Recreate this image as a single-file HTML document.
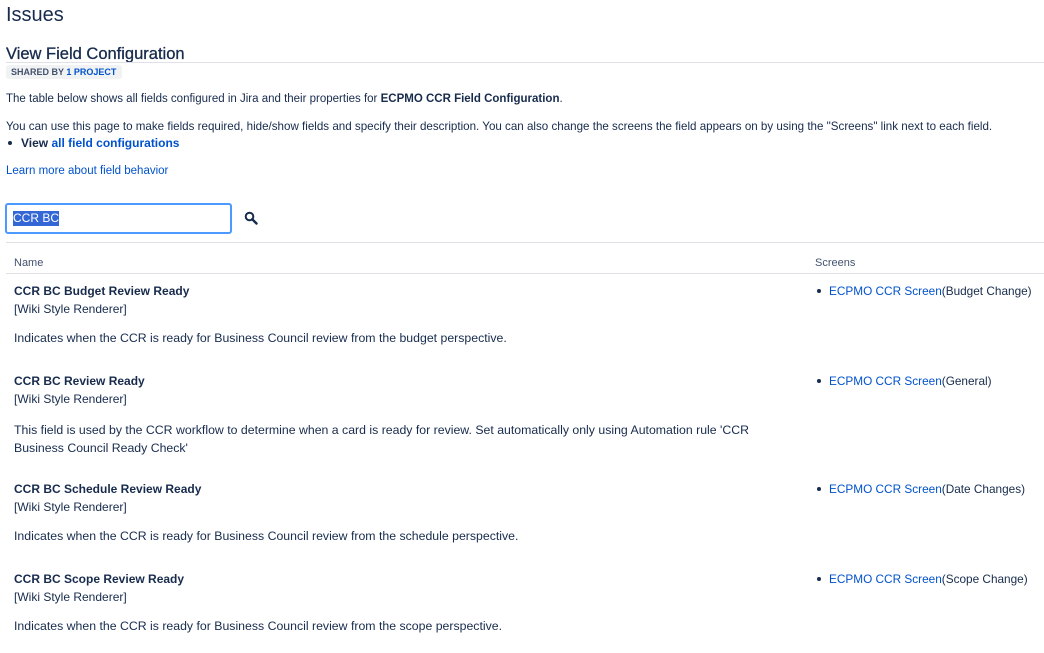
<!DOCTYPE html>
<html><head><meta charset="utf-8"><style>
body{margin:0;width:1044px;height:653px;background:#fff;font-family:"Liberation Sans",sans-serif;color:#172b4d;position:relative;overflow:hidden}
.a{position:absolute;white-space:nowrap}
.t{font-size:12px;line-height:14px}
.d{font-size:12.3px}
a{color:#0052cc;text-decoration:none}
b{font-weight:bold}
.bul{position:absolute;width:4px;height:4px;border-radius:50%;background:#172b4d}
</style></head><body>
<div class="a" style="left:6px;top:3px;font-size:20px;line-height:24px">Issues</div>
<div class="a" style="left:6px;top:44px;font-size:16.5px;line-height:20px;-webkit-text-stroke:0.3px #172b4d">View Field Configuration</div>
<div class="a" style="left:6px;top:62px;width:1038px;height:1px;background:#dfe1e6"></div>
<div class="a" style="left:6px;top:65px;width:116px;height:14px;background:#f1f2f4;border-radius:3px"></div>
<div class="a" style="left:11px;top:67px;font-size:9px;line-height:11px;font-weight:bold;color:#42526e">SHARED BY <a>1 PROJECT</a></div>
<div class="a t" style="left:6px;top:92px;font-size:11.5px">The table below shows all fields configured in Jira and their properties for <b>ECPMO CCR Field Configuration</b>.</div>
<div class="a t" style="left:6px;top:120px;font-size:11.6px">You can use this page to make fields required, hide/show fields and specify their description. You can also change the screens the field appears on by using the "Screens" link next to each field.</div>
<div class="bul" style="left:8px;top:141px"></div>
<div class="a t" style="left:21px;top:136px;font-weight:bold">View <a>all field configurations</a></div>
<div class="a t" style="left:6px;top:164px;font-size:11.5px"><a>Learn more about field behavior</a></div>
<div class="a" style="left:5px;top:203px;width:223px;height:27px;border:2px solid #4c9aff;border-radius:3px"></div>
<div class="a" style="left:13px;top:211px;font-size:12px;line-height:15px;background:#3367d6;color:#fff">CCR BC</div>
<svg class="a" style="left:244px;top:211px" width="14" height="14" viewBox="0 0 14 14"><circle cx="5.5" cy="5.5" r="3.8" fill="none" stroke="#172b4d" stroke-width="2"/><path d="M8.3 8.3L12.5 12.5" stroke="#172b4d" stroke-width="2.4" stroke-linecap="round"/></svg>
<div class="a" style="left:6px;top:242px;width:1038px;height:1px;background:#dfe1e6"></div>
<div class="a t" style="left:14px;top:256px;font-size:11px;color:#42526e">Name</div>
<div class="a t" style="left:815px;top:256px;font-size:11px;color:#42526e">Screens</div>
<div class="a" style="left:6px;top:273px;width:1038px;height:1px;background:#dfe1e6"></div>

<div class="a t" style="left:14px;top:284px;font-weight:bold">CCR BC Budget Review Ready</div>
<div class="a t" style="left:14px;top:302px">[Wiki Style Renderer]</div>
<div class="a t d" style="left:14px;top:331px">Indicates when the CCR is ready for Business Council review from the budget perspective.</div>
<div class="bul" style="left:817px;top:289px"></div>
<div class="a t" style="left:829px;top:284px;font-size:11.8px"><a>ECPMO CCR Screen</a>(Budget Change)</div>

<div class="a t" style="left:14px;top:374px;font-weight:bold">CCR BC Review Ready</div>
<div class="a t" style="left:14px;top:392px">[Wiki Style Renderer]</div>
<div class="a t d" style="left:14px;top:421px;line-height:18px">This field is used by the CCR workflow to determine when a card is ready for review. Set automatically only using Automation rule 'CCR<br>Business Council Ready Check'</div>
<div class="bul" style="left:817px;top:379px"></div>
<div class="a t" style="left:829px;top:374px;font-size:11.8px"><a>ECPMO CCR Screen</a>(General)</div>

<div class="a t" style="left:14px;top:482px;font-weight:bold">CCR BC Schedule Review Ready</div>
<div class="a t" style="left:14px;top:500px">[Wiki Style Renderer]</div>
<div class="a t d" style="left:14px;top:529px">Indicates when the CCR is ready for Business Council review from the schedule perspective.</div>
<div class="bul" style="left:817px;top:487px"></div>
<div class="a t" style="left:829px;top:482px;font-size:11.8px"><a>ECPMO CCR Screen</a>(Date Changes)</div>

<div class="a t" style="left:14px;top:572px;font-weight:bold">CCR BC Scope Review Ready</div>
<div class="a t" style="left:14px;top:590px">[Wiki Style Renderer]</div>
<div class="a t d" style="left:14px;top:619px">Indicates when the CCR is ready for Business Council review from the scope perspective.</div>
<div class="bul" style="left:817px;top:577px"></div>
<div class="a t" style="left:829px;top:572px;font-size:11.8px"><a>ECPMO CCR Screen</a>(Scope Change)</div>
</body></html>
